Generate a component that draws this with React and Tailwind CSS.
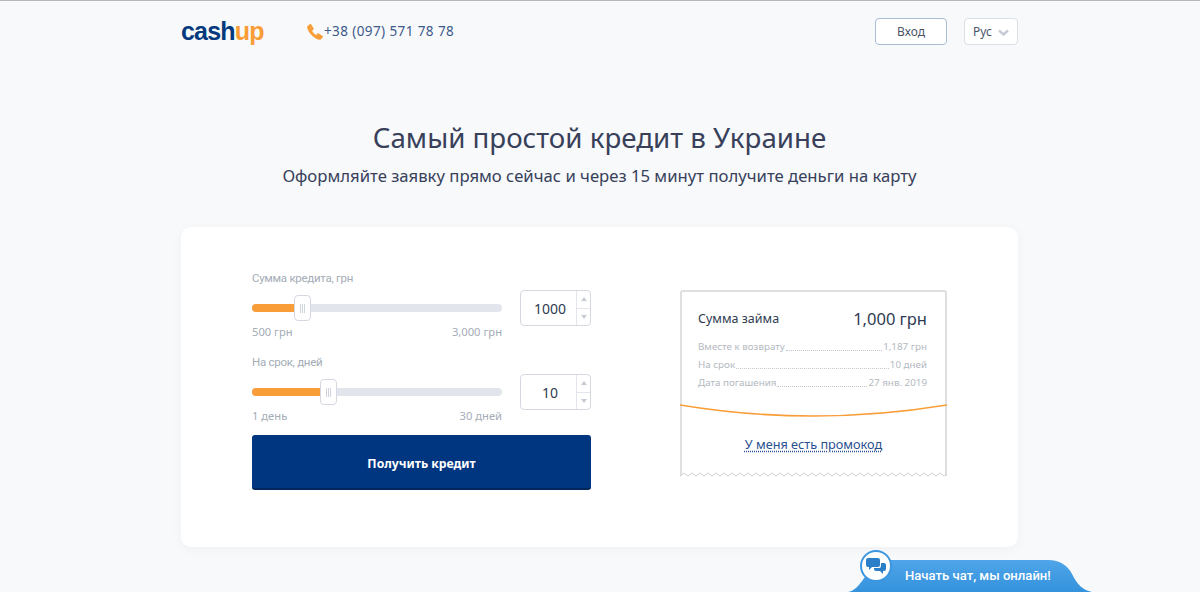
function Slider({ fill, handle }) {
  return (
    <div className="relative h-[26px] w-[250px] flex items-center">
      <div className="h-[8px] w-full rounded-full bg-[#e2e5ec] overflow-hidden">
        <div className="h-full bg-[#f99d38]" style={{ width: fill }} />
      </div>
      <div
        className="absolute top-0 h-[26px] w-[17px] rounded-[4px] border border-[#d5d8e0] bg-white flex items-center justify-center gap-px"
        style={{ left: handle }}
      >
        <span className="h-[9px] w-px bg-[#d0d4dc]" />
        <span className="h-[9px] w-px bg-[#d0d4dc]" />
        <span className="h-[9px] w-px bg-[#d0d4dc]" />
      </div>
    </div>
  );
}

function NumberBox({ value }) {
  return (
    <div className="flex h-[36px] w-[71px] rounded-[4px] border border-[#d5d8e0] bg-white">
      <div className="flex-1 flex items-center justify-center text-[14px] text-[#2f3b52] pl-[3px]">{value}</div>
      <div className="w-[14px] border-l border-[#e2e5ec] flex flex-col">
        <div className="flex-1 border-b border-[#e2e5ec] flex items-center justify-center">
          <span className="h-0 w-0 border-x-[3px] border-b-[4px] border-x-transparent border-b-[#c6cbd5]" />
        </div>
        <div className="flex-1 flex items-center justify-center">
          <span className="h-0 w-0 border-x-[3px] border-t-[4px] border-x-transparent border-t-[#c6cbd5]" />
        </div>
      </div>
    </div>
  );
}

function Range({ label, fill, handle, value, min, max }) {
  return (
    <div>
      <div className="font-['Roboto',sans-serif] text-[11.5px] tracking-[-0.28px] leading-[16px] text-[#a4acb6]">{label}</div>
      <div className="flex items-center justify-between w-[339px] mt-[4px]">
        <Slider fill={fill} handle={handle} />
        <NumberBox value={value} />
      </div>
      <div className="flex justify-between w-[250px] text-[11.2px] leading-[16px] text-[#a4acb6] -mt-[2px]">
        <span>{min}</span>
        <span>{max}</span>
      </div>
    </div>
  );
}

function Line({ label, value }) {
  return (
    <div className="flex items-end text-[9.8px] leading-[18px] text-[#b4b9c1]">
      <span>{label}</span>
      <span className="flex-1 border-b border-dotted border-[#c4c8ce] mb-[5px] mx-px" />
      <span>{value}</span>
    </div>
  );
}

export default function App() {
  return (
    <div className="relative h-screen overflow-hidden border-t border-[#b9b9b9] bg-[#f7f9fa] font-['Noto_Sans',sans-serif] text-[#2f3b52]">
      <div className="mx-auto w-[838px] pr-px">
        <header className="flex h-[61px] items-center justify-between">
          <div className="flex items-center">
            <div className="w-[126px] font-['Liberation_Sans',sans-serif] text-[25px] font-bold tracking-[-0.8px] leading-none">
              <span className="text-[#043a7d]">cash</span>
              <span className="text-[#f99d38]">up</span>
            </div>
            <div className="flex items-center gap-px text-[13.5px] tracking-[0.4px] text-[#3d5a8a]">
              <svg width="16" height="16" viewBox="1 1 22 22" fill="#f99d38">
                <path d="M6.6 1.5 10 6.8c.4.6.3 1.3-.2 1.800L8 10.400c1 2.400 3.200 4.700 5.600 5.600l1.800-1.800c.5-.5 1.200-.6 1.800-.2l5.300 3.400c.6.400.7 1.200.2 1.800l-2.500 2.800c-.6.6-1.400.9-2.200.7C10.600 21 3 13.400 1.300 6.100c-.2-.8.100-1.600.7-2.200L4.800 1.300c.5-.5 1.300-.4 1.800.2z" />
              </svg>
              <span>+38 (097) 571 78 78</span>
            </div>
          </div>
          <div className="flex items-center gap-[17px]">
            <div className="flex h-[27px] w-[72px] items-center justify-center rounded-[4px] border border-[#a9bdd6] bg-white text-[12px] text-[#4a5568]">
              Вход
            </div>
            <div className="flex h-[27px] w-[54px] items-center justify-center gap-[6px] rounded-[4px] border border-[#dcdfe5] bg-white text-[12px] text-[#4a5568]">
              Рус
              <svg className="mt-[2px]" width="11" height="7" viewBox="0 0 11 7" fill="none">
                <path d="M1 1.500 5.500 5.500 10 1.500" stroke="#c6cbd5" strokeWidth="2.400" />
              </svg>
            </div>
          </div>
        </header>

        <h1 className="mt-[55px] text-center text-[27.7px] leading-[40px] text-[#38405a]">Самый простой кредит в Украине</h1>
        <p className="mt-[7px] text-center text-[16.7px] leading-[24px] text-[#38405a]">
          Оформляйте заявку прямо сейчас и через 15 минут получите деньги на карту
        </p>

        <div className="mt-[39px] flex h-[320px] justify-between rounded-[10px] bg-white pl-[71px] pr-[71px] pt-[43px] shadow-[0_2px_12px_rgba(30,50,90,0.04)]">
          <div className="w-[339px]">
            <Range label="Сумма кредита, грн" fill="45px" handle="42px" value="1000" min="500 грн" max="3,000 грн" />
            <div className="mt-[14px]">
              <Range label="На срок, дней" fill="72px" handle="68px" value="10" min="1 день" max="30 дней" />
            </div>
            <div className="mt-[11px] flex h-[55px] items-center justify-center rounded-[3px] border-b-2 border-[#00265c] bg-[#00367f] pt-[5px] text-[12.2px] font-bold text-white">
              Получить кредит
            </div>
          </div>

          <div className="mt-[20px] h-[186px] w-[267px] rounded-t-[3px] border-x-2 border-t-2 border-[#dfdfdf] bg-white flex flex-col">
            <div className="pl-[16px] pr-[18px] pt-[14px]">
              <div className="flex items-end justify-between leading-[26px]">
                <span className="text-[12.5px] text-[#2f3b52]">Сумма займа</span>
                <span className="text-[16.5px] text-[#2f3b52]">1,000 грн</span>
              </div>
              <div className="mt-[6px]">
                <Line label="Вместе к возврату" value="1,187 грн" />
                <Line label="На срок" value="10 дней" />
                <Line label="Дата погашения" value="27 янв. 2019" />
              </div>
            </div>
            <svg className="mt-[11px] -mx-[2px]" width="267" height="15" viewBox="0 0 267 15" fill="none">
              <path d="M0 2 Q133 24 267 2" stroke="#f99d38" strokeWidth="1.600" />
            </svg>
            <div className="mt-[16px] text-center text-[12.7px] leading-[20px] text-[#284f8f] underline decoration-dotted underline-offset-2">
              У меня есть промокод
            </div>
            <svg className="mt-auto -mx-[2px] mb-[-1px]" width="267" height="5" viewBox="0 0 267 5" fill="none">
              <path
                d={'M0 4 ' + Array.from({ length: 34 }, (_, i) => `L${i * 8 + 4} 1 L${i * 8 + 8} 4`).join(' ')}
                stroke="#d2d2d2"
                strokeWidth="1"
              />
            </svg>
          </div>
        </div>
      </div>

      <div className="absolute bottom-0 left-[848px] h-[32px] w-[244px]">
        <svg className="absolute inset-0" width="244" height="32" viewBox="0 0 244 32">
          <defs>
            <linearGradient id="chat" x1="0" y1="0" x2="0" y2="1">
              <stop offset="0" stopColor="#4fa5e8" />
              <stop offset="1" stopColor="#3492dd" />
            </linearGradient>
          </defs>
          <path d="M0 32 C12 30 16 14 28 5 C32 2 36 0 42 0 L200 0 C212 0 220 6 224 14 C229 24 234 30 244 32 Z" fill="url(#chat)" />
        </svg>
        <div className="absolute -top-[10px] left-[12px] flex h-[32px] w-[32px] items-center justify-center rounded-full border-2 border-[#3c97e0] bg-white">
          <svg width="20" height="17" viewBox="0 0 20 17" fill="#2b7fc9">
            <path d="M2 0h10a2 2 0 0 1 2 2v5a2 2 0 0 1-2 2H6l-3 3V9H2a2 2 0 0 1-2-2V2a2 2 0 0 1 2-2z" />
            <path d="M15 5h3a2 2 0 0 1 2 2v4a2 2 0 0 1-2 2h-1v3l-3-3h-4a2 2 0 0 1-2-2v-1h5a2 2 0 0 0 2-2z" />
          </svg>
        </div>
        <div className="absolute left-[57px] top-[7px] font-['Roboto',sans-serif] text-[13.1px] font-medium leading-[18px] text-white whitespace-nowrap">
          Начать чат, мы онлайн!
        </div>
      </div>
    </div>
  );
}
